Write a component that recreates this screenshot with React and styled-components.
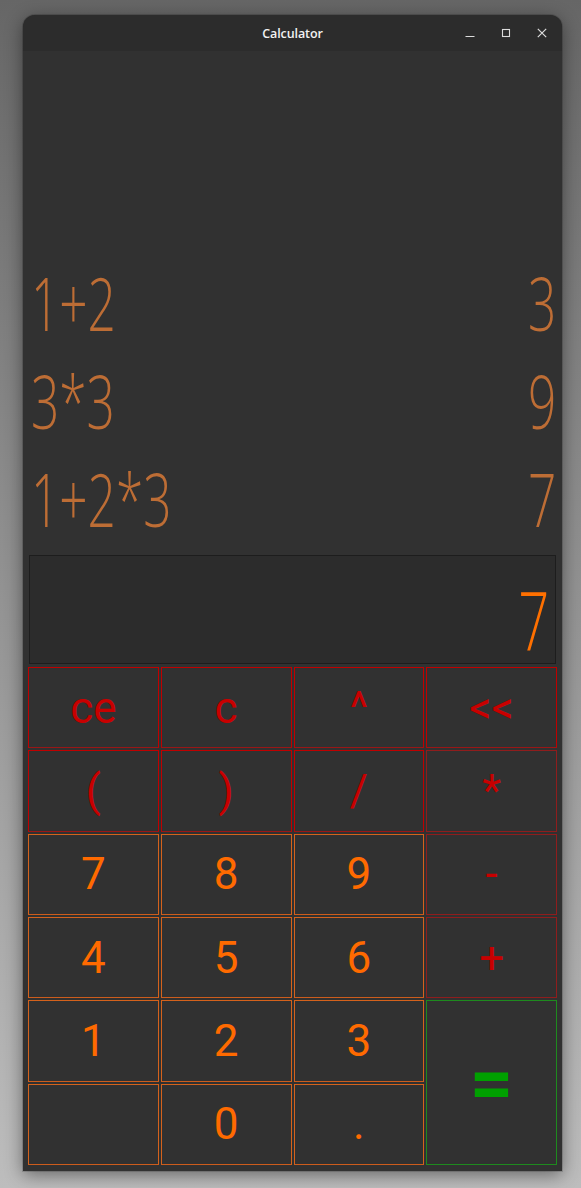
import React from "react";
import styled, { createGlobalStyle } from "styled-components";

const Global = createGlobalStyle`
  html, body { margin: 0; padding: 0; }
  body {
    width: 581px;
    height: 1188px;
    overflow: hidden;
    background: linear-gradient(180deg, #666666 0%, #8a8a8a 40%, #bdbdbd 100%);
    font-family: "Roboto", "Liberation Sans", sans-serif;
  }
`;

const Screen = styled.div`
  padding: 15px 19px 0 23px;
`;

const Window = styled.div`
  width: 539px;
  height: 1156px;
  background: #313131;
  border-radius: 12px 12px 0 0;
  box-shadow: 0 4px 18px rgba(0, 0, 0, 0.45), 0 0 0 1px rgba(0, 0, 0, 0.15);
  display: flex;
  flex-direction: column;
  overflow: hidden;
`;

const TitleBar = styled.div`
  height: 36px;
  flex: none;
  background: #2c2c2c;
  display: grid;
  grid-template-columns: 1fr auto 1fr;
  align-items: center;
`;

const Title = styled.div`
  grid-column: 2;
  color: #f2f2f2;
  font-family: "Open Sans", "Noto Sans", sans-serif;
  font-weight: 600;
  font-size: 12.5px;
  letter-spacing: -0.1px;
`;

const Controls = styled.div`
  grid-column: 3;
  justify-self: end;
  display: flex;
  padding-right: 2px;
  height: 100%;
`;

const Control = styled.div`
  width: 36px;
  height: 100%;
  display: flex;
  align-items: center;
  justify-content: center;
  color: #dcdcdc;
`;

const Body = styled.div`
  flex: 1;
  display: flex;
  flex-direction: column;
  padding: 0 5px 6px 5px;
  min-height: 0;
`;

const History = styled.div`
  flex: 1;
  display: flex;
  flex-direction: column;
  justify-content: flex-end;
  padding: 0 1px 0 3px;
`;

const HistoryRow = styled.div`
  height: 98px;
  display: flex;
  justify-content: space-between;
  align-items: flex-start;
  font-family: "Open Sans", "DejaVu Sans", sans-serif;
  font-weight: 300;
  font-size: 74px;
  line-height: 98px;
  color: #bd6d35;
  white-space: nowrap;
`;

const Condensed = styled.span`
  display: inline-block;
  transform: scaleX(0.67);
  transform-origin: ${(p) => (p.$right ? "right" : "left")} center;
`;

const Display = styled.div`
  height: 109px;
  box-sizing: border-box;
  margin: 7px 1px 0 1px;
  background: #2c2c2c;
  border: 1px solid #1d1d1d;
  display: flex;
  justify-content: flex-end;
  align-items: flex-end;
  padding: 0 6px 4px 0;
  font-family: "Open Sans", "DejaVu Sans", sans-serif;
  font-weight: 300;
  font-size: 81px;
  line-height: 81px;
  color: #ff7000;
`;

const Keypad = styled.div`
  margin-top: 3px;
  height: 498px;
  flex: none;
  display: grid;
  grid-template-columns: repeat(4, 1fr);
  grid-template-rows: repeat(6, 1fr);
  gap: 2px;
`;

const palettes = {
  red: { text: "#c80000", border: "#c00000", bottom: "#9a1616" },
  dark: { text: "#c80000", border: "#8f1d1d", bottom: "#8f1d1d" },
  orange: { text: "#ff6a00", border: "#d4621c", bottom: "#cc5c1c" },
  green: { text: "#00a000", border: "#1e8a1e", bottom: "#1e8a1e" },
};

const Key = styled.button`
  margin: 0;
  padding: 0;
  box-sizing: border-box;
  background: #313131;
  border: 1px solid ${(p) => palettes[p.$tone].border};
  border-bottom-color: ${(p) => palettes[p.$tone].bottom};
  color: ${(p) => palettes[p.$tone].text};
  font-family: "Roboto", "Liberation Sans", sans-serif;
  font-size: ${(p) => (p.$big ? "76px" : "44px")};
  font-weight: ${(p) => (p.$big ? 700 : 400)};
  display: flex;
  align-items: center;
  justify-content: center;
  grid-row: ${(p) => (p.$tall ? "span 2" : "auto")};
  line-height: 1;
`;

const history = [
  ["1+2", "3"],
  ["3*3", "9"],
  ["1+2*3", "7"],
];

const keys = [
  ["ce", "red"], ["c", "red"], ["^", "red"], ["<<", "red"],
  ["(", "red"], [")", "red"], ["/", "red"], ["*", "dark"],
  ["7", "orange"], ["8", "orange"], ["9", "orange"], ["-", "dark"],
  ["4", "orange"], ["5", "orange"], ["6", "orange"], ["+", "dark"],
  ["1", "orange"], ["2", "orange"], ["3", "orange"], ["=", "green", true],
  ["", "orange"], ["0", "orange"], [".", "orange"],
];

export default function App() {
  return (
    <>
      <Global />
      <Screen>
        <Window>
          <TitleBar>
            <Title>Calculator</Title>
            <Controls>
              <Control>
                <svg width="12" height="12" viewBox="0 0 12 12">
                  <path d="M1.5 9.5h9" stroke="currentColor" strokeWidth="1.2" />
                </svg>
              </Control>
              <Control>
                <svg width="12" height="12" viewBox="0 0 12 12">
                  <rect x="2.5" y="2.5" width="7" height="7" fill="none" stroke="currentColor" strokeWidth="1.1" />
                </svg>
              </Control>
              <Control>
                <svg width="12" height="12" viewBox="0 0 12 12">
                  <path d="M1.8 1.8l8.4 8.4M10.2 1.8l-8.4 8.4" stroke="currentColor" strokeWidth="1.2" />
                </svg>
              </Control>
            </Controls>
          </TitleBar>
          <Body>
            <History>
              {history.map(([expr, res]) => (
                <HistoryRow key={expr}>
                  <Condensed>{expr}</Condensed>
                  <Condensed $right>{res}</Condensed>
                </HistoryRow>
              ))}
            </History>
            <Display>
              <Condensed $right>7</Condensed>
            </Display>
            <Keypad>
              {keys.map(([label, tone, tall], i) => (
                <Key key={i} $tone={tone} $tall={tall} $big={label === "="}>
                  {label}
                </Key>
              ))}
            </Keypad>
          </Body>
        </Window>
      </Screen>
    </>
  );
}
